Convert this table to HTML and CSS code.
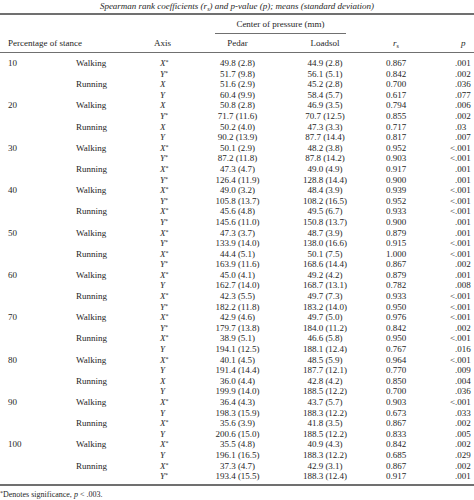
FILE: index.html
```html
<!DOCTYPE html>
<html>
<head>
<meta charset="utf-8">
<link rel="stylesheet" href="styles.css">
</head>
<body>
<div class="title">Spearman rank coefficients (<i>r</i><span class="sub">s</span>) and p-value (p); means (standard deviation)</div>
<table class="data">
<colgroup>
<col class="c1"><col class="c2"><col class="c3"><col class="c4"><col class="c5"><col class="c6"><col class="c7">
</colgroup>
<thead>
<tr class="h1">
<th></th><th></th><th></th>
<th colspan="2" class="copcell"><div class="cop">Center of pressure (mm)</div></th>
<th></th><th></th>
</tr>
<tr class="h2">
<th colspan="2" class="hstance">Percentage of stance</th>
<th class="haxis">Axis</th>
<th class="hc">Pedar</th>
<th class="hc">Loadsol</th>
<th class="hc"><i>r</i><span class="sub">s</span></th>
<th class="hp"><i>p</i></th>
</tr>
</thead>
<tbody>
<tr class="first"><td class="st">10</td><td class="md">Walking</td><td class="ax"><i>X</i><span class="star">*</span></td><td class="n">49.8 (2.8)</td><td class="n">44.9 (2.8)</td><td class="n">0.867</td><td class="p">.001</td></tr>
<tr><td class="st"></td><td class="md"></td><td class="ax"><i>Y</i><span class="star">*</span></td><td class="n">51.7 (9.8)</td><td class="n">56.1 (5.1)</td><td class="n">0.842</td><td class="p">.002</td></tr>
<tr><td class="st"></td><td class="md">Running</td><td class="ax"><i>X</i></td><td class="n">51.6 (2.9)</td><td class="n">45.2 (2.8)</td><td class="n">0.700</td><td class="p">.036</td></tr>
<tr><td class="st"></td><td class="md"></td><td class="ax"><i>Y</i></td><td class="n">60.4 (9.9)</td><td class="n">58.4 (5.7)</td><td class="n">0.617</td><td class="p">.077</td></tr>
<tr><td class="st">20</td><td class="md">Walking</td><td class="ax"><i>X</i></td><td class="n">50.8 (2.8)</td><td class="n">46.9 (3.5)</td><td class="n">0.794</td><td class="p">.006</td></tr>
<tr><td class="st"></td><td class="md"></td><td class="ax"><i>Y</i><span class="star">*</span></td><td class="n">71.7 (11.6)</td><td class="n">70.7 (12.5)</td><td class="n">0.855</td><td class="p">.002</td></tr>
<tr><td class="st"></td><td class="md">Running</td><td class="ax"><i>X</i></td><td class="n">50.2 (4.0)</td><td class="n">47.3 (3.3)</td><td class="n">0.717</td><td class="p">.03</td></tr>
<tr><td class="st"></td><td class="md"></td><td class="ax"><i>Y</i></td><td class="n">90.2 (13.9)</td><td class="n">87.7 (14.4)</td><td class="n">0.817</td><td class="p">.007</td></tr>
<tr><td class="st">30</td><td class="md">Walking</td><td class="ax"><i>X</i><span class="star">*</span></td><td class="n">50.1 (2.9)</td><td class="n">48.2 (3.8)</td><td class="n">0.952</td><td class="p"><span class="lt">&lt;</span>.001</td></tr>
<tr><td class="st"></td><td class="md"></td><td class="ax"><i>Y</i><span class="star">*</span></td><td class="n">87.2 (11.8)</td><td class="n">87.8 (14.2)</td><td class="n">0.903</td><td class="p"><span class="lt">&lt;</span>.001</td></tr>
<tr><td class="st"></td><td class="md">Running</td><td class="ax"><i>X</i><span class="star">*</span></td><td class="n">47.3 (4.7)</td><td class="n">49.0 (4.9)</td><td class="n">0.917</td><td class="p">.001</td></tr>
<tr><td class="st"></td><td class="md"></td><td class="ax"><i>Y</i><span class="star">*</span></td><td class="n">126.4 (11.9)</td><td class="n">128.8 (14.4)</td><td class="n">0.900</td><td class="p">.001</td></tr>
<tr><td class="st">40</td><td class="md">Walking</td><td class="ax"><i>X</i><span class="star">*</span></td><td class="n">49.0 (3.2)</td><td class="n">48.4 (3.9)</td><td class="n">0.939</td><td class="p"><span class="lt">&lt;</span>.001</td></tr>
<tr><td class="st"></td><td class="md"></td><td class="ax"><i>Y</i><span class="star">*</span></td><td class="n">105.8 (13.7)</td><td class="n">108.2 (16.5)</td><td class="n">0.952</td><td class="p"><span class="lt">&lt;</span>.001</td></tr>
<tr><td class="st"></td><td class="md">Running</td><td class="ax"><i>X</i><span class="star">*</span></td><td class="n">45.6 (4.8)</td><td class="n">49.5 (6.7)</td><td class="n">0.933</td><td class="p"><span class="lt">&lt;</span>.001</td></tr>
<tr><td class="st"></td><td class="md"></td><td class="ax"><i>Y</i><span class="star">*</span></td><td class="n">145.6 (11.0)</td><td class="n">150.8 (13.7)</td><td class="n">0.900</td><td class="p">.001</td></tr>
<tr><td class="st">50</td><td class="md">Walking</td><td class="ax"><i>X</i><span class="star">*</span></td><td class="n">47.3 (3.7)</td><td class="n">48.7 (3.9)</td><td class="n">0.879</td><td class="p">.001</td></tr>
<tr><td class="st"></td><td class="md"></td><td class="ax"><i>Y</i><span class="star">*</span></td><td class="n">133.9 (14.0)</td><td class="n">138.0 (16.6)</td><td class="n">0.915</td><td class="p"><span class="lt">&lt;</span>.001</td></tr>
<tr><td class="st"></td><td class="md">Running</td><td class="ax"><i>X</i><span class="star">*</span></td><td class="n">44.4 (5.1)</td><td class="n">50.1 (7.5)</td><td class="n">1.000</td><td class="p"><span class="lt">&lt;</span>.001</td></tr>
<tr><td class="st"></td><td class="md"></td><td class="ax"><i>Y</i><span class="star">*</span></td><td class="n">163.9 (11.6)</td><td class="n">168.6 (14.4)</td><td class="n">0.867</td><td class="p">.002</td></tr>
<tr><td class="st">60</td><td class="md">Walking</td><td class="ax"><i>X</i><span class="star">*</span></td><td class="n">45.0 (4.1)</td><td class="n">49.2 (4.2)</td><td class="n">0.879</td><td class="p">.001</td></tr>
<tr><td class="st"></td><td class="md"></td><td class="ax"><i>Y</i></td><td class="n">162.7 (14.0)</td><td class="n">168.7 (13.1)</td><td class="n">0.782</td><td class="p">.008</td></tr>
<tr><td class="st"></td><td class="md">Running</td><td class="ax"><i>X</i><span class="star">*</span></td><td class="n">42.3 (5.5)</td><td class="n">49.7 (7.3)</td><td class="n">0.933</td><td class="p"><span class="lt">&lt;</span>.001</td></tr>
<tr><td class="st"></td><td class="md"></td><td class="ax"><i>Y</i><span class="star">*</span></td><td class="n">182.2 (11.8)</td><td class="n">183.2 (14.0)</td><td class="n">0.950</td><td class="p"><span class="lt">&lt;</span>.001</td></tr>
<tr><td class="st">70</td><td class="md">Walking</td><td class="ax"><i>X</i><span class="star">*</span></td><td class="n">42.9 (4.6)</td><td class="n">49.7 (5.0)</td><td class="n">0.976</td><td class="p"><span class="lt">&lt;</span>.001</td></tr>
<tr><td class="st"></td><td class="md"></td><td class="ax"><i>Y</i><span class="star">*</span></td><td class="n">179.7 (13.8)</td><td class="n">184.0 (11.2)</td><td class="n">0.842</td><td class="p">.002</td></tr>
<tr><td class="st"></td><td class="md">Running</td><td class="ax"><i>X</i><span class="star">*</span></td><td class="n">38.9 (5.1)</td><td class="n">46.6 (5.8)</td><td class="n">0.950</td><td class="p"><span class="lt">&lt;</span>.001</td></tr>
<tr><td class="st"></td><td class="md"></td><td class="ax"><i>Y</i></td><td class="n">194.1 (12.5)</td><td class="n">188.1 (12.4)</td><td class="n">0.767</td><td class="p">.016</td></tr>
<tr><td class="st">80</td><td class="md">Walking</td><td class="ax"><i>X</i><span class="star">*</span></td><td class="n">40.1 (4.5)</td><td class="n">48.5 (5.9)</td><td class="n">0.964</td><td class="p"><span class="lt">&lt;</span>.001</td></tr>
<tr><td class="st"></td><td class="md"></td><td class="ax"><i>Y</i></td><td class="n">191.4 (14.4)</td><td class="n">187.7 (12.1)</td><td class="n">0.770</td><td class="p">.009</td></tr>
<tr><td class="st"></td><td class="md">Running</td><td class="ax"><i>X</i></td><td class="n">36.0 (4.4)</td><td class="n">42.8 (4.2)</td><td class="n">0.850</td><td class="p">.004</td></tr>
<tr><td class="st"></td><td class="md"></td><td class="ax"><i>Y</i></td><td class="n">199.9 (14.0)</td><td class="n">188.5 (12.2)</td><td class="n">0.700</td><td class="p">.036</td></tr>
<tr><td class="st">90</td><td class="md">Walking</td><td class="ax"><i>X</i><span class="star">*</span></td><td class="n">36.4 (4.3)</td><td class="n">43.7 (5.7)</td><td class="n">0.903</td><td class="p"><span class="lt">&lt;</span>.001</td></tr>
<tr><td class="st"></td><td class="md"></td><td class="ax"><i>Y</i></td><td class="n">198.3 (15.9)</td><td class="n">188.3 (12.2)</td><td class="n">0.673</td><td class="p">.033</td></tr>
<tr><td class="st"></td><td class="md">Running</td><td class="ax"><i>X</i><span class="star">*</span></td><td class="n">35.6 (3.9)</td><td class="n">41.8 (3.5)</td><td class="n">0.867</td><td class="p">.002</td></tr>
<tr><td class="st"></td><td class="md"></td><td class="ax"><i>Y</i></td><td class="n">200.6 (15.0)</td><td class="n">188.5 (12.2)</td><td class="n">0.833</td><td class="p">.005</td></tr>
<tr><td class="st">100</td><td class="md">Walking</td><td class="ax"><i>X</i><span class="star">*</span></td><td class="n">35.5 (4.8)</td><td class="n">40.9 (4.3)</td><td class="n">0.842</td><td class="p">.002</td></tr>
<tr><td class="st"></td><td class="md"></td><td class="ax"><i>Y</i></td><td class="n">196.1 (16.5)</td><td class="n">188.3 (12.2)</td><td class="n">0.685</td><td class="p">.029</td></tr>
<tr><td class="st"></td><td class="md">Running</td><td class="ax"><i>X</i><span class="star">*</span></td><td class="n">37.3 (4.7)</td><td class="n">42.9 (3.1)</td><td class="n">0.867</td><td class="p">.002</td></tr>
<tr class="last"><td class="st"></td><td class="md"></td><td class="ax"><i>Y</i><span class="star">*</span></td><td class="n">193.4 (15.5)</td><td class="n">188.3 (12.4)</td><td class="n">0.917</td><td class="p">.001</td></tr>
</tbody>
</table>
<div class="note"><span class="star">*</span>Denotes significance, <i>p</i> &lt; .003.</div>
</body>
</html>
```

FILE: styles.css
```css
html, body {
  margin: 0;
  padding: 0;
  background: #ffffff;
}
body {
  width: 474px;
  overflow: hidden;
  font-family: "Liberation Serif", "Times New Roman", serif;
  font-size: 9px;
  color: #262626;
}
.title {
  height: 13px;
  line-height: 13px;
  text-align: center;
  font-style: italic;
  white-space: nowrap;
}
.sub {
  font-size: 6px;
  line-height: 0;
  vertical-align: -2px;
}
.data {
  border-collapse: separate;
  border-spacing: 0;
  table-layout: fixed;
  width: 474px;
  border-top: 2px solid #707070;
  border-bottom: 2px solid #707070;
}
.c1 { width: 70px; }
.c2 { width: 80px; }
.c3 { width: 50px; }
.c4 { width: 75px; }
.c5 { width: 100px; }
.c6 { width: 42px; }
.c7 { width: 57px; }
th {
  font-weight: normal;
  padding: 0;
  white-space: nowrap;
}
.h1 th {
  height: 18px;
  line-height: 18px;
  vertical-align: top;
}
.copcell {
  text-align: left;
}
.cop {
  margin-left: 15px;
  width: 131px;
  text-align: center;
  line-height: 18px;
  border-bottom: 1px solid #707070;
}
.h2 th {
  height: 18px;
  line-height: 18px;
  border-bottom: 1px solid #707070;
}
.hstance {
  text-align: left;
  padding-left: 8px;
}
.h2 .haxis {
  text-align: left;
  padding-left: 4px;
}
.hc {
  text-align: center;
}
.h2 .hp {
  text-align: left;
  padding-left: 44px;
}
td {
  padding: 0;
  line-height: 10.6px;
  white-space: nowrap;
}
.first td {
  padding-top: 5px;
}
.last td {
  padding-bottom: 2px;
}
.st {
  padding-left: 8px;
}
.md {
  padding-left: 6px;
}
.ax {
  padding-left: 10px;
}
.star {
  font-size: 6px;
  vertical-align: 2px;
  line-height: 0;
}
.n {
  text-align: center;
}
.p {
  padding-left: 38px;
}
.lt {
  margin-left: -5px;
}
.note {
  margin-top: 3px;
  font-size: 8px;
  line-height: 12px;
  white-space: nowrap;
}
```
